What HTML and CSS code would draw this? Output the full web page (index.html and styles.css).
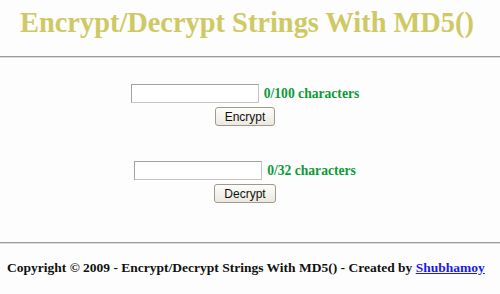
FILE: index.html
```html
<!DOCTYPE html>
<html>
<head>
<meta charset="utf-8">
<title>Encrypt/Decrypt Strings With MD5()</title>
<link rel="stylesheet" href="styles.css">
</head>
<body>
<h1 class="title">Encrypt/Decrypt Strings With MD5()</h1>
<hr class="rule">
<div class="forms">
  <div class="block">
    <div class="row"><input class="field" type="text"> <span class="count">0/100 characters</span></div>
    <button class="btn" type="button">Encrypt</button>
  </div>
  <div class="block second">
    <div class="row"><input class="field" type="text"> <span class="count">0/32 characters</span></div>
    <button class="btn" type="button">Decrypt</button>
  </div>
</div>
<hr class="rule">
<p class="footer">Copyright © 2009 - Encrypt/Decrypt Strings With MD5() - Created by <a class="link" href="#">Shubhamoy</a></p>
</body>
</html>
```

FILE: styles.css
```css
html, body {
  margin: 0;
  padding: 0;
  background: #fcfdfc;
}
body {
  font-family: "Liberation Serif", "Times New Roman", serif;
}
.title {
  margin: 0;
  padding-top: 7px;
  padding-right: 6px;
  height: 56px;
  box-sizing: border-box;
  text-align: center;
  font-size: 28.4px;
  font-weight: bold;
  color: #cfc964;
  line-height: 32px;
}
.rule {
  margin: 0;
  height: 0;
  border: 0;
  border-top: 1px solid #9c9c9c;
  border-bottom: 1px solid #dcdcdc;
}
.forms {
  height: 184px;
  padding-top: 26px;
  padding-right: 10px;
  box-sizing: border-box;
}
.block {
  display: flex;
  flex-direction: column;
  align-items: center;
}
.second {
  margin-top: 35px;
}
.row {
  display: flex;
  align-items: center;
  gap: 5px;
}
.field {
  width: 128px;
  height: 19px;
  box-sizing: border-box;
  border: 1px solid #a5a29c;
  border-right-color: #c9c6c0;
  border-bottom-color: #c9c6c0;
  background: #fff;
  margin: 0;
  padding: 0;
}
.count {
  font-weight: bold;
  font-size: 13.6px;
  color: #0d9a38;
}
.btn {
  margin-top: 4px;
  height: 19px;
  padding: 0 9px;
  font-family: "Liberation Sans", Arial, sans-serif;
  font-size: 12px;
  color: #111;
  background: linear-gradient(#fdfdfb, #ebe8e0);
  border: 1px solid #a09a8c;
  border-radius: 3px;
}
.footer {
  margin: 0;
  padding-top: 16px;
  padding-left: 7px;
  font-size: 13.5px;
  font-weight: bold;
  color: #111;
}
.link {
  color: #1a1aee;
}
```
